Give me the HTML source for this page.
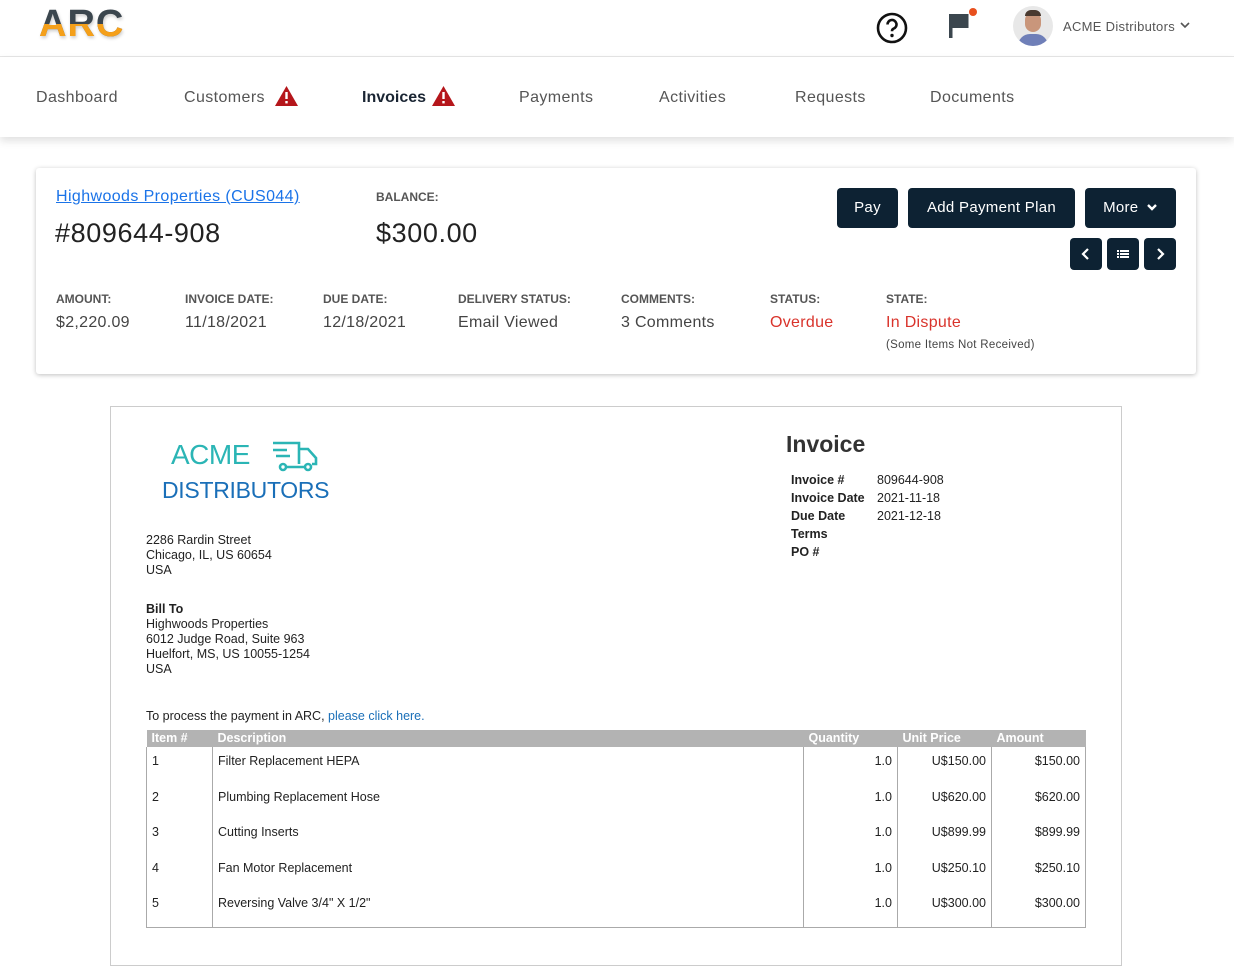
<!DOCTYPE html>
<html><head><meta charset="utf-8"><style>
*{box-sizing:border-box;margin:0;padding:0}
body{width:1234px;height:935px;overflow:hidden;background:#fff;font-family:"Liberation Sans",sans-serif;color:#333;position:relative}
.abs{position:absolute;white-space:nowrap}
.top{position:absolute;left:0;top:0;width:1234px;height:57px;border-bottom:1px solid #e6e6e6;background:#fff}
.nav{position:absolute;left:0;top:57px;width:1234px;height:80px;background:#fff;box-shadow:0 4px 8px rgba(0,0,0,.12)}
.nav span{position:absolute;top:32px;font-size:16px;color:#555;letter-spacing:.4px}
.card{position:absolute;left:36px;top:168px;width:1160px;height:206px;background:#fff;box-shadow:0 1px 5px rgba(0,0,0,.25);border-radius:3px}
.lbl{position:absolute;font-size:12px;font-weight:bold;color:#555;white-space:nowrap}
.val{position:absolute;font-size:16px;color:#444;white-space:nowrap;letter-spacing:.3px}
.btn{position:absolute;background:#0d2233;color:#fff;border-radius:4px;font-size:15px;text-align:center;line-height:40px;letter-spacing:.3px}
.doc{position:absolute;left:110px;top:406px;width:1012px;height:560px;border:1px solid #ccc;background:#fff}
.d{position:absolute;font-size:12.5px;color:#222;white-space:nowrap;line-height:15px}
table{position:absolute;left:146px;top:730px;width:940px;border-collapse:collapse;font-size:12.5px}
th{background:#b3b3b3;color:#fff;text-align:left;height:17px;padding:0 5px;font-weight:bold;line-height:17px}
td{border-left:1px solid #aaa;border-right:1px solid #aaa;height:35.5px;vertical-align:top;padding:7px 5px 0;color:#222}
tr:last-child td{border-bottom:1px solid #aaa;height:38px}
.r{text-align:right}
</style></head><body>
<div class="top">
<div class="abs" style="left:39px;top:2px;font-size:38px;font-weight:900;letter-spacing:1px;color:#3b464e;line-height:44px;text-shadow:1px 2px 3px rgba(0,0,0,.2)">ARC</div>
<div class="abs" style="left:39px;top:24px;width:90px;height:18px;overflow:hidden"><div style="font-size:38px;font-weight:900;letter-spacing:1px;color:#f5a01a;line-height:44px;margin-top:-22px">ARC</div></div>
<svg class="abs" style="left:875px;top:11px" width="34" height="34" viewBox="0 0 34 34"><circle cx="17" cy="17" r="14" fill="none" stroke="#111" stroke-width="2.6"/><path d="M12.5 13.5a4.5 4.5 0 1 1 6 4.2c-1.2.5-1.5 1.2-1.5 2.6" fill="none" stroke="#111" stroke-width="2.6"/><circle cx="17" cy="24.5" r="1.7" fill="#111"/></svg>
<svg class="abs" style="left:946px;top:7px" width="34" height="34" viewBox="0 0 34 34"><rect x="3" y="7" width="3.5" height="24" fill="#3b464e"/><path d="M6.5 7h16v14h-8v-4h-8z" fill="#3b464e"/><path d="M6.5 17h8v4h-8z" fill="#3b464e"/><circle cx="27" cy="5" r="4" fill="#e8501e"/></svg>
<div class="abs" style="left:1013px;top:6px;width:40px;height:40px;border-radius:50%;background:#e8e8e8;overflow:hidden"><div style="position:absolute;left:12px;top:6px;width:16px;height:20px;border-radius:8px;background:#c9967b"></div><div style="position:absolute;left:12px;top:4px;width:16px;height:6px;border-radius:6px 6px 0 0;background:#4a3a30"></div><div style="position:absolute;left:5px;top:28px;width:30px;height:16px;border-radius:12px 12px 0 0;background:#6f7fb8"></div></div>
<div class="abs" style="left:1063px;top:19px;font-size:13px;color:#555;letter-spacing:.3px">ACME Distributors</div>
<svg class="abs" style="left:1180px;top:21px" width="10" height="8"><path d="M1 2l4 4 4-4" fill="none" stroke="#555" stroke-width="1.6"/></svg>
</div>
<div class="nav">
<span style="left:36px">Dashboard</span>
<span style="left:184px">Customers</span>
<svg class="abs" style="left:275px;top:29px" width="23" height="20" viewBox="0 0 23 20"><path d="M11.5 0L23 20H0z" fill="#b5161b"/><rect x="10.3" y="6" width="2.4" height="7" fill="#fff"/><rect x="10.3" y="15" width="2.4" height="2.4" fill="#fff"/></svg>
<span style="left:362px;color:#1a2533;font-weight:bold;letter-spacing:0">Invoices</span>
<svg class="abs" style="left:432px;top:29px" width="23" height="20" viewBox="0 0 23 20"><path d="M11.5 0L23 20H0z" fill="#b5161b"/><rect x="10.3" y="6" width="2.4" height="7" fill="#fff"/><rect x="10.3" y="15" width="2.4" height="2.4" fill="#fff"/></svg>
<span style="left:519px">Payments</span>
<span style="left:659px">Activities</span>
<span style="left:795px">Requests</span>
<span style="left:930px">Documents</span>
</div>
<div class="card">
<div class="abs" style="left:20px;top:20px;font-size:16px;color:#1a73e8;text-decoration:underline;letter-spacing:.4px">Highwoods Properties (CUS044)</div>
<div class="abs" style="left:19px;top:50px;font-size:27px;color:#222;letter-spacing:.6px">#809644-908</div>
<div class="lbl" style="left:340px;top:22px">BALANCE:</div>
<div class="abs" style="left:340px;top:50px;font-size:27px;color:#222;letter-spacing:.6px">$300.00</div>
<div class="btn" style="left:801px;top:20px;width:61px">Pay</div>
<div class="btn" style="left:872px;top:20px;width:167px">Add Payment Plan</div>
<div class="btn" style="left:1049px;top:20px;width:91px">More <svg width="12" height="9" style="margin-left:3px"><path d="M2 2l4 4 4-4" fill="none" stroke="#fff" stroke-width="2.4"/></svg></div>
<div class="btn" style="left:1034px;top:70px;width:32px;height:32px"><svg width="32" height="32"><path d="M18 11l-5 5 5 5" fill="none" stroke="#fff" stroke-width="2.2"/></svg></div>
<div class="btn" style="left:1071px;top:70px;width:32px;height:32px"><svg width="32" height="32"><g fill="#fff"><rect x="10" y="12" width="2" height="2"/><rect x="13" y="12" width="9" height="2"/><rect x="10" y="15" width="2" height="2"/><rect x="13" y="15" width="9" height="2"/><rect x="10" y="18" width="2" height="2"/><rect x="13" y="18" width="9" height="2"/></g></svg></div>
<div class="btn" style="left:1108px;top:70px;width:32px;height:32px"><svg width="32" height="32"><path d="M14 11l5 5-5 5" fill="none" stroke="#fff" stroke-width="2.2"/></svg></div>
<div class="lbl" style="left:20px;top:124px">AMOUNT:</div><div class="val" style="left:20px;top:146px">$2,220.09</div>
<div class="lbl" style="left:149px;top:124px">INVOICE DATE:</div><div class="val" style="left:149px;top:146px">11/18/2021</div>
<div class="lbl" style="left:287px;top:124px">DUE DATE:</div><div class="val" style="left:287px;top:146px">12/18/2021</div>
<div class="lbl" style="left:422px;top:124px">DELIVERY STATUS:</div><div class="val" style="left:422px;top:146px">Email Viewed</div>
<div class="lbl" style="left:585px;top:124px">COMMENTS:</div><div class="val" style="left:585px;top:146px">3 Comments</div>
<div class="lbl" style="left:734px;top:124px">STATUS:</div><div class="val" style="left:734px;top:146px;color:#d9332b">Overdue</div>
<div class="lbl" style="left:850px;top:124px">STATE:</div><div class="val" style="left:850px;top:146px;color:#d9332b">In Dispute</div>
<div class="abs" style="left:850px;top:171px;font-size:11.5px;color:#444;letter-spacing:.3px">(Some Items Not Received)</div>
</div>
<div class="doc"></div>
<div class="abs" style="left:171px;top:439px;font-size:28px;color:#2bb5b5;letter-spacing:-.5px">ACME</div>
<svg class="abs" style="left:270px;top:440px" width="52" height="34" viewBox="0 0 52 34"><g fill="none" stroke="#2bb5b5" stroke-width="2.6"><path d="M3 3h26v21"/><path d="M29 9h9l8 9v6h-4"/><path d="M3 10h14M6 16h14"/><circle cx="13" cy="27" r="3"/><circle cx="38" cy="27" r="3"/><path d="M17 27h17"/></g></svg>
<div class="abs" style="left:162px;top:477px;font-size:23px;color:#1a6fb8;letter-spacing:-.3px">DISTRIBUTORS</div>
<div class="d" style="left:146px;top:533px">2286 Rardin Street<br>Chicago, IL, US 60654<br>USA</div>
<div class="d" style="left:146px;top:602px"><b>Bill To</b><br>Highwoods Properties<br>6012 Judge Road, Suite 963<br>Huelfort, MS, US 10055-1254<br>USA</div>
<div class="abs" style="left:786px;top:431px;font-size:23px;font-weight:bold;color:#333">Invoice</div>
<div class="d" style="left:791px;top:471px;line-height:18px;font-weight:bold">Invoice #<br>Invoice Date<br>Due Date<br>Terms<br>PO #</div>
<div class="d" style="left:877px;top:471px;line-height:18px">809644-908<br>2021-11-18<br>2021-12-18</div>
<div class="d" style="left:146px;top:709px">To process the payment in ARC, <span style="color:#1a6fb8">please click here.</span></div>
<table>
<tr><th style="width:66px">Item #</th><th style="width:591px">Description</th><th style="width:94px">Quantity</th><th style="width:94px">Unit Price</th><th>Amount</th></tr>
<tr><td>1</td><td>Filter Replacement HEPA</td><td class="r">1.0</td><td class="r">U$150.00</td><td class="r">$150.00</td></tr>
<tr><td>2</td><td>Plumbing Replacement Hose</td><td class="r">1.0</td><td class="r">U$620.00</td><td class="r">$620.00</td></tr>
<tr><td>3</td><td>Cutting Inserts</td><td class="r">1.0</td><td class="r">U$899.99</td><td class="r">$899.99</td></tr>
<tr><td>4</td><td>Fan Motor Replacement</td><td class="r">1.0</td><td class="r">U$250.10</td><td class="r">$250.10</td></tr>
<tr><td>5</td><td>Reversing Valve 3/4" X 1/2"</td><td class="r">1.0</td><td class="r">U$300.00</td><td class="r">$300.00</td></tr>
</table>
</body></html>
